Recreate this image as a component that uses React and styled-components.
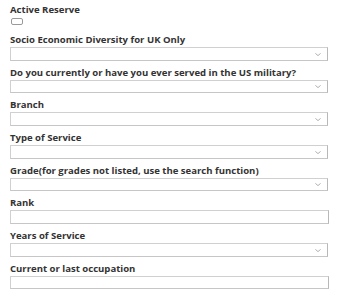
import React from "react";
import styled, { createGlobalStyle } from "styled-components";

const Global = createGlobalStyle`
  html, body { margin: 0; padding: 0; background: #ffffff; }
  body { font-family: "Open Sans", "Noto Sans", sans-serif; }
`;

const Form = styled.div`
  display: flex;
  flex-direction: column;
  padding: 4px 27px 0 10px;
  width: 356px;
  box-sizing: border-box;
`;

const Field = styled.div`
  display: flex;
  flex-direction: column;
  margin-bottom: ${(p) => p.$gap ?? 7}px;
`;

const Label = styled.div`
  font-size: 9.55px;
  font-weight: 700;
  line-height: 12px;
  height: 12px;
  color: #333333;
  white-space: nowrap;
  margin-bottom: 1px;
`;

const Checkbox = styled.div`
  width: 10px;
  height: 5px;
  margin: 1px 0 0 1px;
  border: 1px solid #9a9a9a;
  border-radius: 2px;
  background: #fff;
`;

const Box = styled.div`
  position: relative;
  height: 13.5px;
  box-sizing: border-box;
  margin-right: ${(p) => (p.$select ? 1.5 : 0)}px;
  border: 1px solid #d0d0d0;
  border-right-color: #b8b8b8;
  border-bottom-color: #c6c6c6;
  background: #fff;
`;

const Chevron = styled.svg`
  position: absolute;
  right: 6px;
  top: 4.5px;
  width: 6px;
  height: 3px;
`;

function Select() {
  return (
    <Box $select>
      <Chevron viewBox="0 0 6 3">
        <path d="M0.4 0.4 L3 2.6 L5.6 0.4" fill="none" stroke="#9c9c9c" strokeWidth="0.8" />
      </Chevron>
    </Box>
  );
}

const fields = [
  { label: "Socio Economic Diversity for UK Only", type: "select" },
  { label: "Do you currently or have you ever served in the US military?", type: "select" },
  { label: "Branch", type: "select" },
  { label: "Type of Service", type: "select" },
  { label: "Grade(for grades not listed, use the search function)", type: "select" },
  { label: "Rank", type: "input" },
  { label: "Years of Service", type: "select" },
  { label: "Current or last occupation", type: "input" },
];

export default function App() {
  return (
    <>
      <Global />
      <Form>
        <Field $gap={9}>
          <Label>Active Reserve</Label>
          <Checkbox />
        </Field>
        {fields.map((f) => (
          <Field key={f.label} $gap={6.2}>
            <Label>{f.label}</Label>
            {f.type === "select" ? <Select /> : <Box />}
          </Field>
        ))}
      </Form>
    </>
  );
}
